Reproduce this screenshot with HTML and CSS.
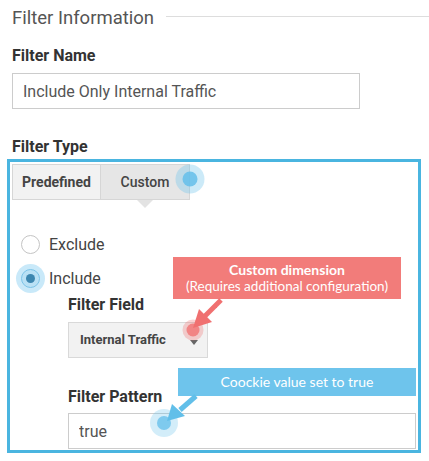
FILE: index.html
```html
<!DOCTYPE html>
<html lang="en">
<head>
    <meta charset="UTF-8">
    <meta name="viewport" content="width=device-width, initial-scale=1.0">
    <title>Filter Information</title>
    <link rel="stylesheet" href="styles.css">
</head>
<body>
    <div class="page">
        <div class="section-head">
            <h2>Filter Information</h2>
            <span class="rule"></span>
        </div>

        <div class="field first">
            <label for="filterName">Filter Name</label>
            <input type="text" id="filterName" class="text-input" value="Include Only Internal Traffic">
        </div>

        <div class="field type-field">
            <label>Filter Type</label>
            <div class="highlight-box">
                <div class="tabs">
                    <button type="button" class="tab">Predefined</button>
                    <button type="button" class="tab active">Custom</button>
                </div>

                <div class="radios">
                    <div class="radio"><span class="radio-dot"></span>Exclude</div>
                    <div class="radio checked"><span class="radio-dot"></span>Include</div>
                </div>

                <div class="sub-fields">
                    <div class="field">
                        <label>Filter Field</label>
                        <div class="select">Internal Traffic<span class="caret"></span></div>
                    </div>
                    <div class="field pattern-field">
                        <label for="filterPattern">Filter Pattern</label>
                        <input type="text" id="filterPattern" class="text-input" value="true">
                    </div>
                </div>
            </div>
        </div>

        <!-- annotations -->
        <div class="callout callout-red">
            <strong>Custom dimension</strong>
            <span>(Requires additional configuration)</span>
        </div>
        <div class="callout callout-blue">Coockie value set to true</div>

        <svg class="marks" width="429" height="461" viewBox="0 0 429 461">
            <circle cx="190" cy="179" r="14.5" fill="rgba(110,195,236,0.35)"/>
            <circle cx="190" cy="179" r="7.5" fill="rgba(100,190,234,0.85)"/>

            <circle cx="193" cy="330" r="10.5" fill="rgba(240,110,110,0.3)"/>
            <circle cx="193" cy="330" r="6.5" fill="rgba(240,110,110,0.75)"/>
            <line x1="221" y1="300" x2="203" y2="318" stroke="#f07070" stroke-width="5"/>
            <polygon points="193,328 199,309 212,322" fill="#f07070"/>

            <circle cx="164" cy="423" r="14" fill="rgba(110,195,236,0.3)"/>
            <circle cx="164" cy="423" r="7" fill="rgba(110,195,236,0.85)"/>
            <line x1="196" y1="396" x2="180" y2="410" stroke="#62bfe9" stroke-width="5"/>
            <polygon points="167,421 172,404 185,416" fill="#62bfe9"/>
        </svg>
    </div>
</body>
</html>
```

FILE: styles.css
```css
body {
    font-family: Roboto, "Liberation Sans", sans-serif;
    margin: 0;
    padding: 0;
    background-color: #fff;
    color: #333;
}

.page {
    position: relative;
    padding: 7px 0 0 12px;
    width: 417px;
    height: 454px;
}

.section-head {
    display: flex;
    align-items: center;
    height: 22px;
}

.section-head h2 {
    margin: 0;
    font-size: 18.5px;
    font-weight: 400;
    line-height: 22px;
    color: #555;
}

.section-head .rule {
    flex: 1;
    margin-left: 12px;
    margin-top: -4px;
    border-top: 1px solid #ddd;
}

.field > label {
    display: block;
    font-size: 16px;
    font-weight: bold;
    line-height: 20px;
    color: #333;
    margin-bottom: 7px;
}

.field.first {
    margin-top: 17px;
}

.text-input {
    display: block;
    box-sizing: border-box;
    width: 348px;
    height: 36px;
    padding: 0 10px;
    border: 1px solid #ccc;
    font-family: Roboto, "Liberation Sans", sans-serif;
    font-size: 16px;
    color: #555;
    background: #fff;
    outline: none;
}

.type-field {
    margin-top: 28px;
}

.type-field > label {
    margin-bottom: 2px;
}

.highlight-box {
    box-sizing: border-box;
    width: 414px;
    margin-left: -5px;
    border: 3px solid #4ab5e0;
    padding: 2px 0 1px 2px;
}

.tabs {
    display: flex;
}

.tab {
    position: relative;
    box-sizing: border-box;
    width: 89px;
    height: 36px;
    border: 1px solid #d6d6d6;
    background: #f2f2f2;
    font-family: Roboto, "Liberation Sans", sans-serif;
    font-size: 14px;
    font-weight: bold;
    color: #444;
    padding: 0;
    cursor: pointer;
}

.tab + .tab {
    border-left: none;
}

.tab.active {
    background: #e6e6e6;
    font-weight: 500;
}

.tab.active::after {
    content: "";
    position: absolute;
    left: 36px;
    top: 35px;
    border-left: 8px solid transparent;
    border-right: 8px solid transparent;
    border-top: 8px solid #e3e3e3;
}

.radios {
    margin-top: 27px;
    padding-left: 9px;
}

.radio {
    display: flex;
    align-items: center;
    height: 34px;
    font-size: 16px;
    color: #444;
}

.radio-dot {
    position: relative;
    flex-shrink: 0;
    box-sizing: border-box;
    width: 19px;
    height: 19px;
    margin-right: 9px;
    border: 1px solid #c4c4c4;
    border-radius: 50%;
    background: #fff;
}

.radio.checked .radio-dot {
    border-color: #7cc4e8;
    background: #b9e1f5;
    box-shadow: 0 0 0 5px rgba(120, 200, 240, 0.4);
}

.radio.checked .radio-dot::after {
    content: "";
    position: absolute;
    left: 4px;
    top: 4px;
    width: 9px;
    height: 9px;
    border-radius: 50%;
    background: #3c87b0;
}

.sub-fields {
    padding-left: 56px;
}

.select {
    position: relative;
    box-sizing: border-box;
    width: 140px;
    height: 36px;
    padding-left: 11px;
    border: 1px solid #d9d9d9;
    background: #f2f2f2;
    font-size: 13px;
    font-weight: bold;
    line-height: 34px;
    color: #444;
}

.caret {
    position: absolute;
    left: 121px;
    top: 17px;
    border-left: 4px solid transparent;
    border-right: 4px solid transparent;
    border-top: 5px solid #666;
}

.pattern-field {
    margin-top: 29px;
}

.pattern-field > label {
    margin-bottom: 6px;
}

.callout {
    position: absolute;
    box-sizing: border-box;
    color: #fff;
    font-family: Lato, "Open Sans", sans-serif;
    text-align: center;
}

.callout-red {
    left: 173px;
    top: 257px;
    width: 228px;
    height: 42px;
    padding-top: 5px;
    background: #f27c7a;
    font-size: 13.5px;
    line-height: 16px;
}

.callout-red strong {
    display: block;
    font-size: 14px;
}

.callout-red span {
    display: block;
}

.callout-blue {
    left: 178px;
    top: 368px;
    width: 238px;
    height: 28px;
    background: #6ec4ec;
    font-size: 14px;
    line-height: 28px;
}

.marks {
    position: absolute;
    left: 0;
    top: 0;
    pointer-events: none;
}
```
